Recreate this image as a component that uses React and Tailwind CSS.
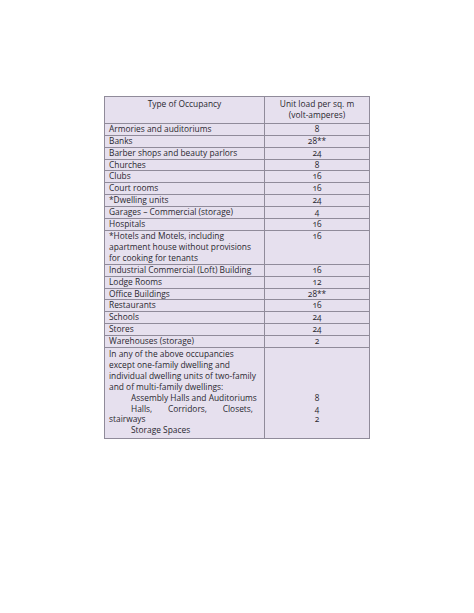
const rows = [
  { type: ["Armories and auditoriums"], load: "8" },
  { type: ["Banks"], load: "28**" },
  { type: ["Barber shops and beauty parlors"], load: "24" },
  { type: ["Churches"], load: "8" },
  { type: ["Clubs"], load: "16" },
  { type: ["Court rooms"], load: "16" },
  { type: ["*Dwelling units"], load: "24" },
  { type: ["Garages – Commercial (storage)"], load: "4" },
  { type: ["Hospitals"], load: "16" },
  {
    type: ["*Hotels and Motels, including", "apartment house without provisions", "for cooking for tenants"],
    load: "16",
  },
  { type: ["Industrial Commercial (Loft) Building"], load: "16" },
  { type: ["Lodge Rooms"], load: "12" },
  { type: ["Office Buildings"], load: "28**" },
  { type: ["Restaurants"], load: "16" },
  { type: ["Schools"], load: "24" },
  { type: ["Stores"], load: "24" },
  { type: ["Warehouses (storage)"], load: "2" },
];

const cell = "border border-[#908b9a] px-[4px] py-0 align-top leading-[10.9px] whitespace-nowrap";

export default function App() {
  return (
    <div
      className="min-h-screen bg-white pt-[96px] pl-[104px] text-[8.4px] text-[#2a2830]"
      style={{ fontFamily: "'Open Sans', Lato, sans-serif" }}
    >
      <table className="w-[266px] table-fixed border-collapse bg-[#e6e0ee]">
        <colgroup>
          <col className="w-[160px]" />
          <col />
        </colgroup>
        <thead>
          <tr>
            <th className={`${cell} pt-[2px] pb-[2px] text-center font-normal`}>Type of Occupancy</th>
            <th className={`${cell} pt-[2px] pb-[2px] text-center font-normal`}>
              Unit load per sq. m
              <br />
              (volt-amperes)
            </th>
          </tr>
        </thead>
        <tbody>
          {rows.map((r) => (
            <tr key={r.type[0]}>
              <td className={cell}>
                {r.type.map((line) => (
                  <div key={line}>{line}</div>
                ))}
              </td>
              <td className={`${cell} text-center oldstyle-nums`}>{r.load}</td>
            </tr>
          ))}
          <tr>
            <td className={`${cell} pt-[1px] pb-[2px]`}>
              <div>In any of the above occupancies</div>
              <div>except one-family dwelling and</div>
              <div>individual dwelling units of two-family</div>
              <div>and of multi-family dwellings:</div>
              <div className="pl-[22px]">Assembly Halls and Auditoriums</div>
              <div className="flex justify-between pl-[22px] pr-[7px]">
                <span>Halls,</span>
                <span>Corridors,</span>
                <span>Closets,</span>
              </div>
              <div>stairways</div>
              <div className="pl-[22px]">Storage Spaces</div>
            </td>
            <td className={`${cell} pt-[1px] pb-[2px] text-center oldstyle-nums`}>
              <div className="h-[43.6px]" />
              <div>8</div>
              <div>4</div>
              <div>2</div>
            </td>
          </tr>
        </tbody>
      </table>
    </div>
  );
}
